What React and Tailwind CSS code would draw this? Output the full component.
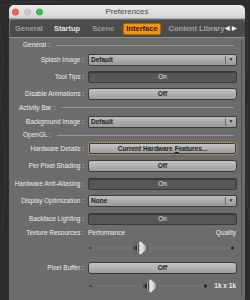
const FONT = { fontFamily: '"Liberation Sans", Arial, sans-serif' };

function SectionHeader({ label, h, pl }) {
  return (
    <div className={`flex items-center ${h} ${pl} pr-[7px]`}>
      <span className="text-[6.5px] text-[#ececec] whitespace-nowrap">{label}</span>
      <div className="ml-[6px] flex-1 h-px bg-[#959595]" />
    </div>
  );
}

function Row({ label, h, children }) {
  return (
    <div className={`flex items-center ${h}`}>
      <div className="w-[76px] pr-px text-right text-[6.5px] text-[#ececec] whitespace-nowrap">{label}</div>
      <div className="ml-[3px] w-[149px]">{children}</div>
    </div>
  );
}

function OffButton({ children = 'Off' }) {
  return (
    <div className="flex h-[12px] items-center justify-center rounded-[3px] border border-[#3c3c3c] bg-gradient-to-b from-[#c4c4c4] to-[#9d9d9d] text-[6.5px] font-bold text-[#1c1c1c]">
      {children}
    </div>
  );
}

function OnButton() {
  return (
    <div className="flex h-[12px] items-center justify-center rounded-[2px] border border-[#3a3a3a] bg-[#575757] shadow-[inset_0_1px_1px_rgba(0,0,0,0.35)] text-[6.5px] text-[#e2e2e2]">
      On
    </div>
  );
}

function Dropdown({ value }) {
  return (
    <div className="flex h-[12px] items-center rounded-[2px] border border-[#3c3c3c] bg-gradient-to-b from-[#bdbdbd] to-[#9a9a9a]">
      <span className="flex-1 pl-[2px] text-[6.5px] font-bold text-[#1c1c1c]">{value}</span>
      <div className="h-[8px] w-px bg-[#6a6a6a]" />
      <span className="w-[10px] text-center text-[5px] text-[#2a2a2a]">▼</span>
    </div>
  );
}

// diamond slider knob
function Thumb() {
  return (
    <svg width="17" height="15" viewBox="0 0 17 15">
      <defs>
        <linearGradient id="tg" x1="0" y1="0" x2="1" y2="0">
          <stop offset="0" stopColor="#3a3a3a" />
          <stop offset="0.3" stopColor="#9a9a9a" />
          <stop offset="0.5" stopColor="#e8e8e8" />
          <stop offset="0.72" stopColor="#d0d0d0" />
          <stop offset="1" stopColor="#4a4a4a" />
        </linearGradient>
      </defs>
      <path d="M8.5 0.5 L15.6 6.3 Q16.5 7.5 15.6 8.7 L8.5 14.5 L1.4 8.7 Q0.5 7.5 1.4 6.3 Z" fill="url(#tg)" stroke="#555" strokeWidth="0.6" />
      <path d="M5 4 L2.4 7.5 L5 11 Z" fill="#262626" />
      <line x1="6.6" y1="3" x2="6.6" y2="12" stroke="#3c3c3c" strokeWidth="0.9" />
    </svg>
  );
}

function Slider({ thumbLeft, trackEnd, suffix }) {
  return (
    <div className="relative h-full">
      <div className="absolute left-px top-1/2 h-px w-[3px] -translate-y-1/2 bg-[#262626]" />
      <div className="absolute left-[8px] top-1/2 h-px -translate-y-1/2 bg-[#7a7a7a]" style={{ width: trackEnd - 8 }} />
      <div className="absolute top-1/2 h-[3px] w-[3px] -translate-y-1/2 rounded-full bg-[#1e1e1e]" style={{ left: trackEnd + 1 }} />
      <div className="absolute top-1/2 -translate-y-1/2" style={{ left: thumbLeft }}>
        <Thumb />
      </div>
      {suffix && (
        <span className="absolute right-[1px] top-1/2 -translate-y-1/2 text-[6.5px] font-bold text-[#f0f0f0]">{suffix}</span>
      )}
    </div>
  );
}

export default function App() {
  return (
    <div className="relative h-[300px] w-[250px] overflow-hidden bg-[#2c2c2c]" style={FONT}>
      <svg className="absolute inset-0" width="250" height="300" viewBox="0 0 250 300">
        <g fill="none" stroke="#3e3e3e" strokeWidth="0.8">
          <path d="M0 20 Q5 60 0 110" />
          <path d="M3 120 Q8 170 2 230" />
          <path d="M246 10 Q250 50 244 90" />
          <path d="M248 100 Q243 160 249 220" />
          <path d="M0 6 Q30 0 60 2" />
        </g>
      </svg>

      <div className="relative ml-[9px] mt-[5px] w-[236px]">
        {/* title bar */}
        <div className="relative flex h-[14px] items-center justify-center rounded-t-[5px] bg-gradient-to-b from-[#ededed] to-[#d4d4d4] border-b border-[#a8a8a8]">
          <div className="absolute left-[3px] top-1/2 flex -translate-y-1/2 gap-[5px]">
            <div className="h-[7px] w-[7px] rounded-full bg-[#fc605c] border border-[#de4a45]" />
            <div className="h-[7px] w-[7px] rounded-full bg-[#cdcdcd] border border-[#bcbcbc]" />
            <div className="h-[7px] w-[7px] rounded-full bg-[#34c84a] border border-[#27aa35]" />
          </div>
          <span className="text-[8px] text-[#4a4a4a]">Preferences</span>
        </div>

        {/* window body */}
        <div className="bg-[#6c6c6c] pb-[10px]">
          <div className="pt-px pl-px">
            <div className="flex h-[17px] items-center rounded-t-[4px] bg-[#4b4b4b] text-[7.5px] font-bold">
              <span className="ml-[5px] text-[#9d9d9d]">General</span>
              <span className="ml-[11px] text-[#e4e4e4]">Startup</span>
              <span className="ml-[12px] text-[#9d9d9d]">Scene</span>
              <span className="ml-[9px] flex h-[12px] items-center rounded-[2px] border border-[#b85f00] bg-[#f7940f] px-[2px] text-[#1e1e1e]">Interface</span>
              <span className="ml-[8px] whitespace-nowrap text-[#a3a3a3]">Content Library</span>
              <span className="ml-[1px] text-[6px] text-[#f2f2f2]">◀</span>
              <span className="ml-[2px] text-[6px] text-[#f2f2f2]">▶</span>
            </div>
          </div>
          <div className="h-[2px] border-t border-[#8c8c8c]" />

          <div className="border-r border-[#555] mr-[3px]">
            <SectionHeader label="General :" h="h-[12px]" pl="pl-[14px]" />
            <Row label="Splash Image :" h="h-[17px]"><Dropdown value="Default" /></Row>
            <Row label="Tool Tips :" h="h-[17px]"><OnButton /></Row>
            <Row label="Disable Animations :" h="h-[17px]"><OffButton /></Row>
            <SectionHeader label="Activity Bar :" h="h-[11px]" pl="pl-[10px]" />
            <Row label="Background Image :" h="h-[17px]"><Dropdown value="Default" /></Row>
            <SectionHeader label="OpenGL :" h="h-[10px]" pl="pl-[14px]" />
            <Row label="Hardware Details :" h="h-[17px]">
              <div className="rounded-[3px] border border-dotted border-[#e8a040]">
                <div className="flex h-[11px] items-center justify-center rounded-[2px] border border-[#3c3c3c] bg-gradient-to-b from-[#c4c4c4] to-[#9d9d9d] text-[6.5px] font-bold text-[#1c1c1c]">
                  Current Hardware <span className="ml-[2px] underline">F</span>eatures...
                </div>
              </div>
            </Row>
            <Row label="Per Pixel Shading :" h="h-[18px]"><OffButton /></Row>
            <Row label="Hardware Anti-Aliasing :" h="h-[17px]"><OnButton /></Row>
            <Row label="Display Optimization :" h="h-[18px]"><Dropdown value="None" /></Row>
            <Row label="Backface Lighting :" h="h-[17px]"><OnButton /></Row>
            <Row label="Texture Resources :" h="h-[11px]">
              <div className="flex justify-between pr-px text-[6.5px] text-[#ececec]">
                <span>Performance</span>
                <span>Quality</span>
              </div>
            </Row>
            <Row label="" h="h-[20px]">
              <div className="h-[20px]"><Slider thumbLeft={44} trackEnd={142} /></div>
            </Row>
            <Row label="Pixel Buffer :" h="h-[19px]"><OffButton /></Row>
            <Row label="" h="h-[18px]">
              <div className="h-[18px]"><Slider thumbLeft={54} trackEnd={115} suffix="1k x 1k" /></div>
            </Row>
          </div>
        </div>
      </div>
    </div>
  );
}
